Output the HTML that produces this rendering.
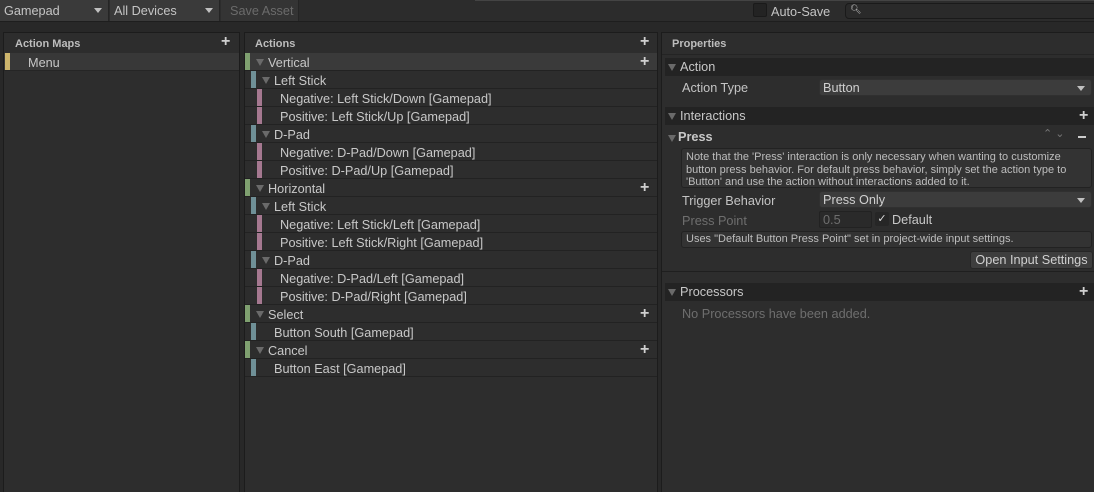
<!DOCTYPE html>
<html><head><style>
*{margin:0;padding:0;box-sizing:border-box}
body{width:1094px;height:492px;background:#282828;font-family:"Liberation Sans","DejaVu Sans",sans-serif;font-size:12.7px;color:#c4c4c4;position:relative;overflow:hidden}
.a{position:absolute;white-space:nowrap}
.panel{position:absolute;top:32px;bottom:0;background:#2d2d2d;border:1px solid #1c1c1c;border-bottom:none}
.hdr{font-size:11px;font-weight:bold;color:#bdbdbd}
.row{position:absolute;height:18px;border-bottom:1px solid #222;left:0;right:0}
.bar{position:absolute;top:0;width:5px;height:17px}
.g{background:#7fa070}.t{background:#6f9097}.p{background:#a57890}.y{background:#cdb56c}
.tri{position:absolute;top:6px;width:0;height:0;border-left:4px solid transparent;border-right:4px solid transparent;border-top:7px solid #6a6a6a}
.txt{position:absolute;top:2px;color:#c8c8c8}
.plus{position:absolute;color:#d0d0d0;font-size:16px;font-weight:bold;line-height:16px}
.sec{position:absolute;left:3px;right:0;height:18px;background:#232323}
.dd{position:absolute;background:#3c3c3c;border-radius:3px;border:1px solid #303030}
.arrow{position:absolute;right:6px;top:6px;border-left:4px solid transparent;border-right:4px solid transparent;border-top:5px solid #c0c0c0}
.help{position:absolute;background:#333;border:1px solid #222;border-radius:3px;font-size:11px;color:#bdbdbd;line-height:12.5px;padding:2px 4px;white-space:normal}
</style></head><body>
<div class="a" style="left:0;top:0;width:1094px;height:22px;background:#2c2c2c;border-bottom:1px solid #1e1e1e"></div>
<div class="a" style="left:475px;top:0;width:619px;height:1px;background:#444"></div>
<div class="a" style="left:0;top:0;width:109px;height:21px;background:#3a3a3a;border-right:1px solid #252525"><span class="a" style="left:4px;top:4px;font-size:12.7px">Gamepad</span><div class="arrow" style="top:8px"></div></div>
<div class="a" style="left:110px;top:0;width:110px;height:21px;background:#3a3a3a;border-right:1px solid #252525"><span class="a" style="left:4px;top:4px;font-size:12.7px">All Devices</span><div class="arrow" style="top:8px"></div></div>
<div class="a" style="left:221px;top:0;width:78px;height:21px;background:#343434;border-right:1px solid #252525"><span class="a" style="left:9px;top:4px;font-size:12.7px;color:#6b6b6b">Save Asset</span></div>
<div class="a" style="left:753px;top:3px;width:14px;height:14px;background:#232323;border:1px solid #1a1a1a;border-radius:2px"></div>
<span class="a" style="left:771px;top:5px;font-size:12.7px;color:#c4c4c4">Auto-Save</span>
<div class="a" style="left:845px;top:3px;width:252px;height:16px;background:#2a2a2a;border:1px solid #1a1a1a;border-radius:4px"><span class="a" style="left:4px;top:0px;font-size:9px;color:#ccc">&#x1F50D;&#xFE0E;</span></div>

<div class="panel" style="left:3px;width:237px">
 <span class="a hdr" style="left:11px;top:5px">Action Maps</span>
 <span class="plus" style="left:217px;top:1px">+</span>
 <div class="row" style="top:20px;background:#383838;border-bottom-color:#252525"><div class="bar y" style="left:1px"></div><span class="txt" style="left:24px;top:3px">Menu</span></div>
</div>

<div class="panel" style="left:244px;width:414px">
 <span class="a hdr" style="left:10px;top:5px">Actions</span>
 <span class="plus" style="left:395px;top:1px">+</span>
 <div class="row" style="top:20px;background:#3a3a3a"><div class="bar g" style="left:0"></div><div class="tri" style="left:11px"></div><span class="txt" style="left:23px;top:3px">Vertical</span><span class="plus" style="left:395px;top:1px">+</span></div>
 <div class="row" style="top:38px"><div class="bar t" style="left:6px"></div><div class="tri" style="left:17px"></div><span class="txt" style="left:29px;top:3px">Left Stick</span></div>
 <div class="row" style="top:56px"><div class="bar p" style="left:12px"></div><span class="txt" style="left:35px;top:3px">Negative: Left Stick/Down [Gamepad]</span></div>
 <div class="row" style="top:74px"><div class="bar p" style="left:12px"></div><span class="txt" style="left:35px;top:3px">Positive: Left Stick/Up [Gamepad]</span></div>
 <div class="row" style="top:92px"><div class="bar t" style="left:6px"></div><div class="tri" style="left:17px"></div><span class="txt" style="left:29px;top:3px">D-Pad</span></div>
 <div class="row" style="top:110px"><div class="bar p" style="left:12px"></div><span class="txt" style="left:35px;top:3px">Negative: D-Pad/Down [Gamepad]</span></div>
 <div class="row" style="top:128px"><div class="bar p" style="left:12px"></div><span class="txt" style="left:35px;top:3px">Positive: D-Pad/Up [Gamepad]</span></div>
 <div class="row" style="top:146px"><div class="bar g" style="left:0"></div><div class="tri" style="left:11px"></div><span class="txt" style="left:23px;top:3px">Horizontal</span><span class="plus" style="left:395px;top:1px">+</span></div>
 <div class="row" style="top:164px"><div class="bar t" style="left:6px"></div><div class="tri" style="left:17px"></div><span class="txt" style="left:29px;top:3px">Left Stick</span></div>
 <div class="row" style="top:182px"><div class="bar p" style="left:12px"></div><span class="txt" style="left:35px;top:3px">Negative: Left Stick/Left [Gamepad]</span></div>
 <div class="row" style="top:200px"><div class="bar p" style="left:12px"></div><span class="txt" style="left:35px;top:3px">Positive: Left Stick/Right [Gamepad]</span></div>
 <div class="row" style="top:218px"><div class="bar t" style="left:6px"></div><div class="tri" style="left:17px"></div><span class="txt" style="left:29px;top:3px">D-Pad</span></div>
 <div class="row" style="top:236px"><div class="bar p" style="left:12px"></div><span class="txt" style="left:35px;top:3px">Negative: D-Pad/Left [Gamepad]</span></div>
 <div class="row" style="top:254px"><div class="bar p" style="left:12px"></div><span class="txt" style="left:35px;top:3px">Positive: D-Pad/Right [Gamepad]</span></div>
 <div class="row" style="top:272px"><div class="bar g" style="left:0"></div><div class="tri" style="left:11px"></div><span class="txt" style="left:23px;top:3px">Select</span><span class="plus" style="left:395px;top:1px">+</span></div>
 <div class="row" style="top:290px"><div class="bar t" style="left:6px"></div><span class="txt" style="left:29px;top:3px">Button South [Gamepad]</span></div>
 <div class="row" style="top:308px"><div class="bar g" style="left:0"></div><div class="tri" style="left:11px"></div><span class="txt" style="left:23px;top:3px">Cancel</span><span class="plus" style="left:395px;top:1px">+</span></div>
 <div class="row" style="top:326px"><div class="bar t" style="left:6px"></div><span class="txt" style="left:29px;top:3px">Button East [Gamepad]</span></div>
</div>

<div class="panel" style="left:661px;width:440px">
 <span class="a hdr" style="left:10px;top:5px">Properties</span>
 <div class="a" style="left:0;right:0;top:21px;height:1px;background:#242424"></div>
 <div class="sec" style="top:25px"><div class="tri" style="left:3px"></div><span class="txt" style="left:15px;top:2px">Action</span></div>
 <span class="a" style="left:20px;top:48px">Action Type</span>
 <div class="dd" style="left:157px;top:46px;width:273px;height:17px"><span class="a" style="left:3px;top:1px;color:#d0d0d0">Button</span><div class="arrow"></div></div>
 <div class="sec" style="top:74px"><div class="tri" style="left:3px"></div><span class="txt" style="left:15px">Interactions</span><span class="plus" style="left:414px;top:1px">+</span></div>
 <div class="tri" style="left:6px;top:102px"></div>
 <span class="a" style="left:16px;top:97px;font-weight:bold;color:#c8c8c8">Press</span>
 <span class="a" style="left:381px;top:94px;color:#777;font-size:11px">&#8963; &#8964;</span>
 <div class="a" style="left:416px;top:103px;width:8px;height:2px;background:#ccc"></div>
 <div class="help" style="left:19px;top:115px;width:411px;height:40px">Note that the 'Press' interaction is only necessary when wanting to customize button press behavior. For default press behavior, simply set the action type to 'Button' and use the action without interactions added to it.</div>
 <span class="a" style="left:20px;top:161px">Trigger Behavior</span>
 <div class="dd" style="left:157px;top:158px;width:273px;height:17px"><span class="a" style="left:3px;top:1px;color:#d0d0d0">Press Only</span><div class="arrow"></div></div>
 <span class="a" style="left:20px;top:181px;color:#6e6e6e">Press Point</span>
 <div class="a" style="left:157px;top:178px;width:53px;height:17px;background:#2a2a2a;border:1px solid #222;border-radius:2px"><span class="a" style="left:3px;top:1px;color:#6e6e6e">0.5</span></div>
 <div class="a" style="left:213px;top:179px;width:14px;height:14px;background:#262626;border-radius:2px;color:#ddd;font-size:11px;line-height:14px;text-align:center">&#10003;</div>
 <span class="a" style="left:230px;top:180px;color:#c8c8c8">Default</span>
 <div class="help" style="left:19px;top:198px;width:411px;height:17px;padding-top:1px;white-space:nowrap">Uses "Default Button Press Point" set in project-wide input settings.</div>
 <div class="a" style="left:308px;top:218px;width:123px;height:18px;background:#3e3e3e;border:1px solid #262626;border-radius:3px;text-align:center;line-height:16px;color:#d0d0d0">Open Input Settings</div>
 <div class="a" style="left:0;right:0;top:238px;height:1px;background:#1f1f1f"></div>
 <div class="sec" style="top:250px"><div class="tri" style="left:3px"></div><span class="txt" style="left:15px">Processors</span><span class="plus" style="left:414px;top:1px">+</span></div>
 <span class="a" style="left:20px;top:274px;color:#6e6e6e">No Processors have been added.</span>
</div>
</body></html>
